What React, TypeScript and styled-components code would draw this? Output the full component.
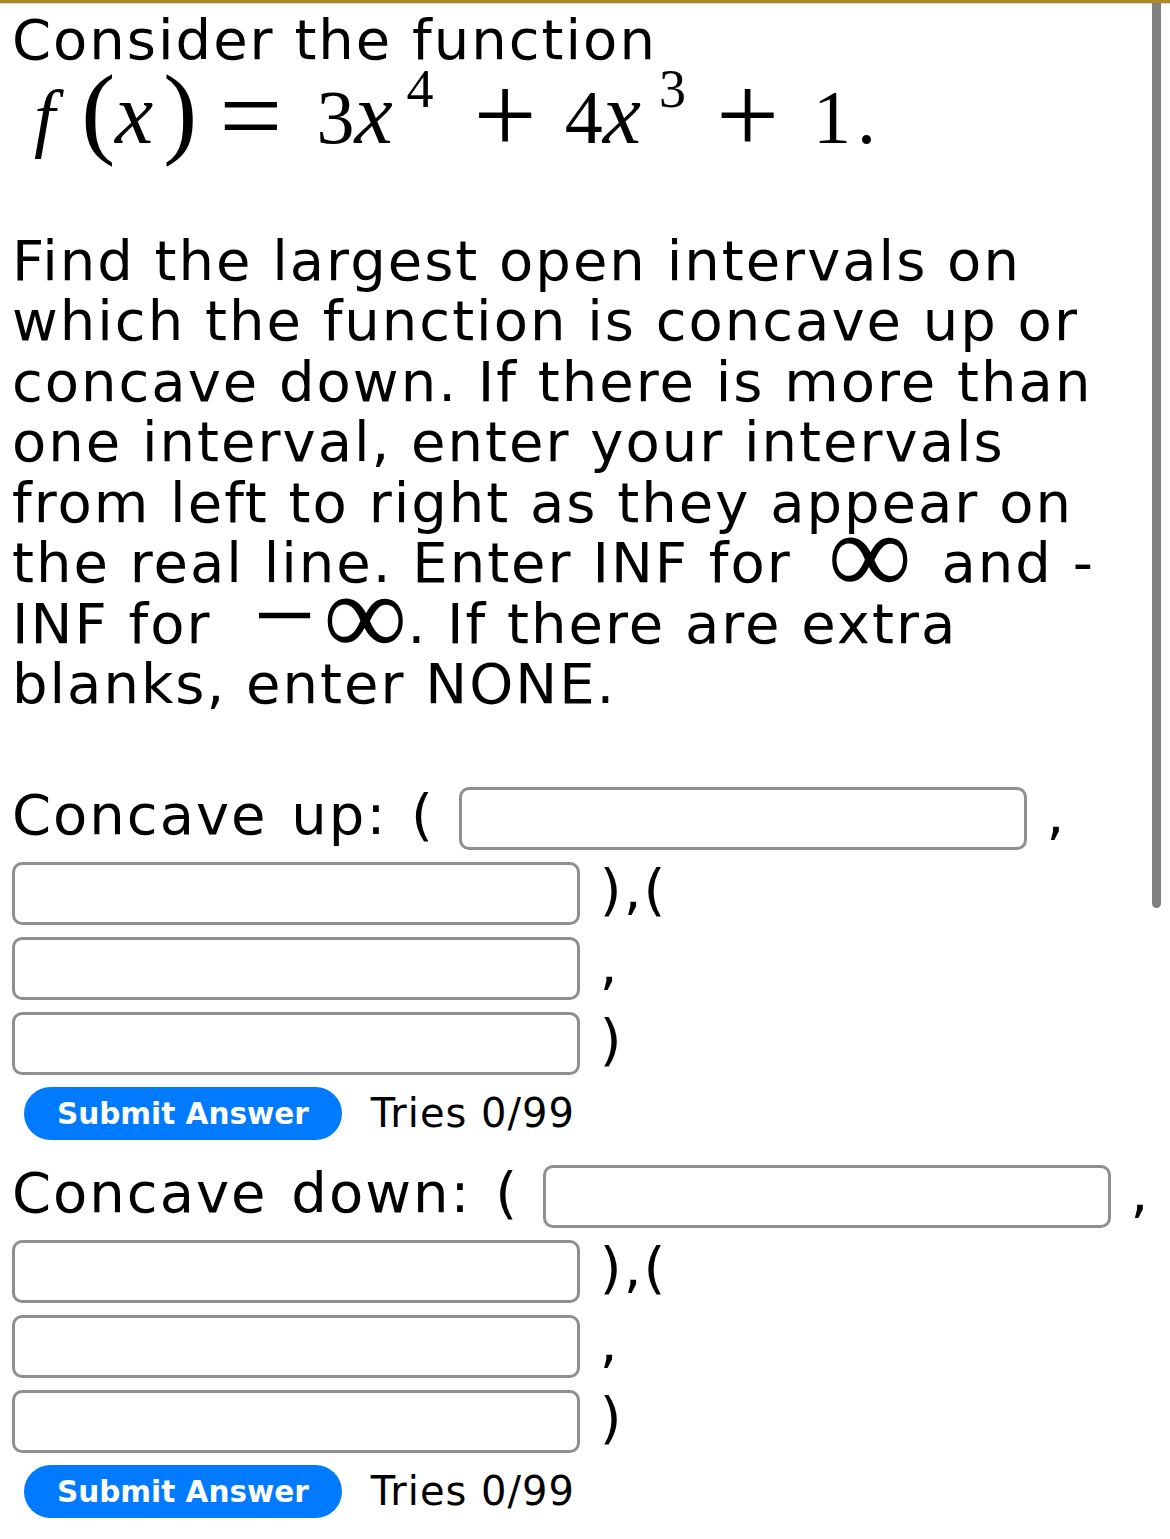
import React from 'react'
import styled, { createGlobalStyle } from 'styled-components'

const GlobalStyle = createGlobalStyle`
  html, body {
    margin: 0;
    padding: 0;
    background: #fff;
  }
  body {
    font-family: "DejaVu Sans", Verdana, sans-serif;
    color: #000;
  }
`

const Page = styled.div`
  position: relative;
  min-height: 1539px;
  overflow: hidden;
  border-top: 3px solid #b08a20;
  box-shadow: inset 0 1px 0 #d8d8d8;
`

const Scrollbar = styled.div`
  position: absolute;
  top: 0;
  right: 9px;
  width: 9px;
  height: 905px;
  background: #808080;
  border-radius: 0 0 5px 5px;
`

const Content = styled.div`
  width: 1146px;
  padding: 7px 0 0 12px;
  font-size: 56px;
  letter-spacing: 2px;
  line-height: 60.5px;
`

const Para = styled.div`
  margin: 0;
`

const MathLine = styled.div`
  display: flex;
  align-items: baseline;
  height: 160px;
  padding: 1px 0 0 22px;
  box-sizing: border-box;
  font-family: "Liberation Serif", "Times New Roman", serif;
  font-size: 76px;
  line-height: 1;
  letter-spacing: 0;
  white-space: nowrap;
`

const Tok = styled.span<{ $ml?: number; $it?: boolean; $kind?: 'paren' | 'op' | 'sup' | 'var' }>`
  position: relative;
  margin-left: ${p => p.$ml ?? 0}px;
  font-style: ${p => (p.$it ? 'italic' : 'normal')};
  ${p =>
    p.$kind === 'paren'
      ? 'font-size: 102px; line-height: 0.7; top: 2px;'
      : p.$kind === 'op'
      ? 'font-size: 112px; line-height: 0.6; top: 10px;'
      : p.$kind === 'sup'
      ? 'font-size: 54px; top: -36px;'
      : p.$kind === 'var'
      ? 'font-size: 86px; line-height: 0.8;'
      : ''}
`

const Minus = styled.span`
  position: relative;
  top: 9px;
  margin-left: 22px;
  font-family: "Liberation Serif", serif;
  font-size: 110px;
  line-height: 0;
  letter-spacing: 0;
`

const Inf = styled.span<{ $ml?: number; $mr?: number }>`
  position: relative;
  top: 12px;
  margin-left: ${p => p.$ml ?? 0}px;
  margin-right: ${p => p.$mr ?? 0}px;
  font-family: "Liberation Serif", serif;
  font-size: 118px;
  line-height: 0;
  letter-spacing: 0;
`

const Answers = styled.div`
  line-height: 75px;
`

const Label = styled.span`
  word-spacing: 4px;
`

const Joined = styled.span`
  white-space: nowrap;
`

const Box = styled.input`
  box-sizing: border-box;
  width: 568px;
  height: 63px;
  border: 3px solid #8e8e93;
  border-radius: 10px;
  background: #fff;
  vertical-align: middle;
  margin: 0;
  padding: 0 10px;
  font-size: 36px;
  outline: none;
`

const SubmitRow = styled.div`
  display: flex;
  align-items: center;
  gap: 29px;
  padding-left: 12px;
  height: 74px;
  margin-bottom: 4px;
`

const SubmitButton = styled.button`
  height: 53px;
  padding: 0 33px;
  border: none;
  border-radius: 27px;
  background: #007aff;
  color: #fff;
  font-family: "DejaVu Sans", Verdana, sans-serif;
  font-weight: bold;
  font-size: 29.5px;
  letter-spacing: 0;
`

const Tries = styled.span`
  font-size: 40px;
  letter-spacing: 1px;
`

const Gap = styled.div<{ $h: number }>`
  height: ${p => p.$h}px;
`

function Group({ label }: { label: string }) {
  return (
    <>
      <Answers>
        <Label>{label}: ( </Label>
        <Joined>
          <Box /> ,
        </Joined>{' '}
        <Joined>
          <Box /> ),(
        </Joined>{' '}
        <Joined>
          <Box /> ,
        </Joined>{' '}
        <Joined>
          <Box /> )
        </Joined>
      </Answers>
      <SubmitRow>
        <SubmitButton>Submit Answer</SubmitButton>
        <Tries>Tries 0/99</Tries>
      </SubmitRow>
    </>
  )
}

export default function App() {
  return (
    <>
      <GlobalStyle />
      <Page>
        <Scrollbar />
        <Content>
          <Para>Consider the function</Para>
          <MathLine>
            <Tok $it>f</Tok>
            <Tok $kind="paren" $ml={26}>(</Tok>
            <Tok $it $kind="var">x</Tok>
            <Tok $kind="paren" $ml={10}>)</Tok>
            <Tok $kind="op" $ml={22}>=</Tok>
            <Tok $ml={34}>3</Tok>
            <Tok $it $kind="var">x</Tok>
            <Tok $kind="sup" $ml={14}>4</Tok>
            <Tok $kind="op" $ml={40}>+</Tok>
            <Tok $ml={28}>4</Tok>
            <Tok $it $kind="var">x</Tok>
            <Tok $kind="sup" $ml={18}>3</Tok>
            <Tok $kind="op" $ml={30}>+</Tok>
            <Tok $ml={34}>1</Tok>
            <Tok $ml={6}>.</Tok>
          </MathLine>
          <Para>
            Find the largest open intervals on which the function is concave up or concave down. If
            there is more than one interval, enter your intervals from left to right as they appear
            on the real line. Enter INF for <Inf $ml={16} $mr={10}>∞</Inf> and -INF for{' '}
            <Minus>−</Minus>
            <Inf $ml={8}>∞</Inf>. If there are extra blanks, enter NONE.
          </Para>
          <Gap $h={62} />
          <Group label="Concave up" />
          <Group label="Concave down" />
        </Content>
      </Page>
    </>
  )
}
